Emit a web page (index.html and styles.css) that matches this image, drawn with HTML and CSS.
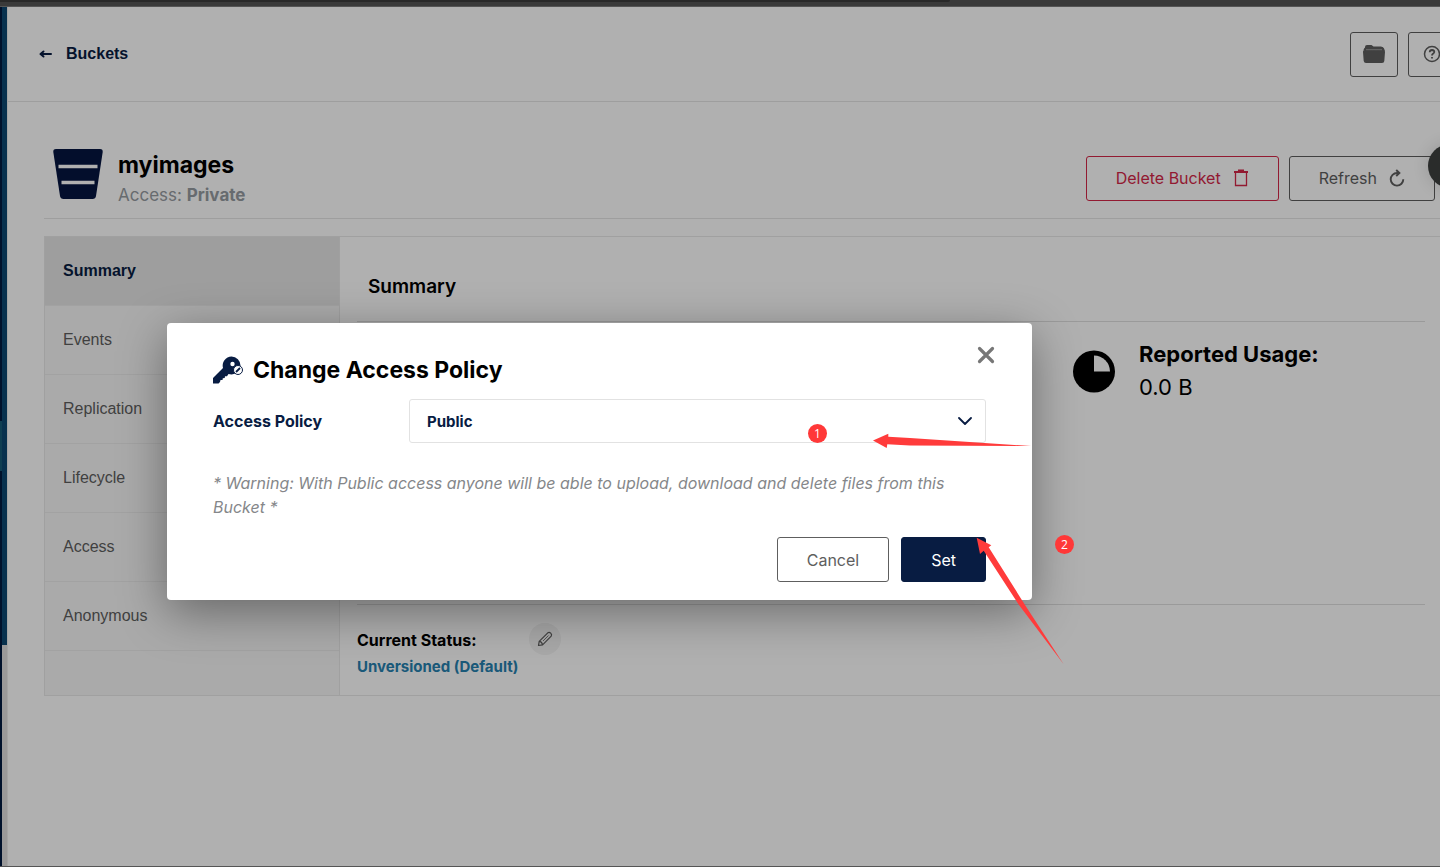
FILE: index.html
```html
<!DOCTYPE html>
<html lang="en">
<head>
    <meta charset="UTF-8">
    <meta name="viewport" content="width=device-width, initial-scale=1.0">
    <title>Buckets - myimages</title>
    <link rel="stylesheet" href="styles.css">
</head>
<body>
    <div class="window-bar"><div class="window-tab"></div></div>

    <div class="app">
        <nav class="sidebar" aria-label="Main menu">
            <div class="sidebar-edge"><div class="sidebar-active"></div></div>
            <div class="sidebar-body"></div>
        </nav>

        <main class="main">
            <header class="page-header">
                <a class="back-link" href="#">
                    <svg width="14" height="12" viewBox="0 0 14 12" fill="none" stroke="currentColor" stroke-width="2" stroke-linecap="round" stroke-linejoin="round">
                        <path d="M12 6H2M4.500 3.500L1.500 6L4.500 8.500"/>
                    </svg>
                    Buckets
                </a>
                <div class="header-actions">
                    <button class="btn icon-btn" aria-label="Object manager">
                        <svg width="24" height="20" viewBox="0 0 24 20" fill="currentColor">
                            <path d="M3 4V3Q3 1 5 1H9.500L11.500 2.500H19Q21.500 2.500 21.800 5L3 5Z"/>
                            <path d="M2.500 6H21.500Q23.200 6 23 8L22.300 17Q22.200 19 20 19H4Q2 19 1.700 17L1 8Q.8 6 2.500 6Z"/>
                            <path d="M1.500 6Q2 3.300 4 3.300H20Q22.300 3.300 22.700 7Z"/>
                            <path d="M4 5.700H20" stroke="#aaa" stroke-width=".8"/>
                        </svg>
                    </button>
                    <button class="btn icon-btn" aria-label="Help">
                        <svg width="18" height="18" viewBox="0 0 18 18" fill="none" stroke="currentColor" stroke-width="1.500">
                            <circle cx="9" cy="9" r="7.500"/>
                            <path d="M6.700 7.200Q6.800 5 9 5Q11.300 5.100 11.300 7Q11.200 8 10 8.700Q9 9.300 9 10.500M9 12V13.600" stroke-width="1.800"/>
                        </svg>
                    </button>
                </div>
            </header>

            <div class="content">
                <section class="bucket-head">
                    <svg class="bucket-icon" width="50" height="50" viewBox="0 0 50 50">
                        <path fill="#051540" d="M3 0H47Q50 0 49.700 3L43 47Q42.500 50 39.500 50H10.500Q7.500 50 7 47L.3 3Q0 0 3 0Z"/>
                        <path stroke="#fff" stroke-width="3.600" d="M5.500 17.500H44.500M8.500 33.500H41.500"/>
                    </svg>
                    <div class="bucket-title">
                        <h1>myimages</h1>
                        <p>Access: <strong>Private</strong></p>
                    </div>
                    <div class="bucket-actions">
                        <button class="btn btn-danger">
                            Delete Bucket
                            <svg width="16" height="18" viewBox="0 0 16 18" fill="none" stroke="currentColor">
                                <path d="M1 3H15M5 1.500H11" stroke-width="2"/>
                                <path d="M2.500 3.500V16.500H13.500V3.500" stroke-width="1.300"/>
                            </svg>
                        </button>
                        <button class="btn">
                            Refresh
                            <svg width="16" height="18" viewBox="0 0 16 18" fill="none" stroke="currentColor" stroke-width="1.900">
                                <path d="M9 4H8A6.300 6.300 0 1 0 14.300 10.300"/>
                                <path d="M7.200 1L10.400 4L7.200 7"/>
                            </svg>
                        </button>
                    </div>
                </section>

                <div class="tabs">
                    <nav class="tab-list">
                        <a class="tab selected" href="#">Summary</a>
                        <a class="tab" href="#">Events</a>
                        <a class="tab" href="#">Replication</a>
                        <a class="tab" href="#">Lifecycle</a>
                        <a class="tab" href="#">Access</a>
                        <a class="tab" href="#">Anonymous</a>
                    </nav>
                    <section class="tab-panel">
                        <h2>Summary</h2>
                        <div class="details">
                            <div class="usage">
                                <svg width="42" height="43" viewBox="0 0 42 43">
                                    <circle cx="21" cy="21.500" r="21"/>
                                    <path fill="#fff" d="M21 5.500A16 16 0 0 1 37 21.500H21Z"/>
                                </svg>
                                <div>
                                    <h3>Reported Usage:</h3>
                                    <p>0.0 B</p>
                                </div>
                            </div>
                        </div>
                        <div class="versioning">
                            <div>
                                <h4>Current Status:</h4>
                                <a href="#">Unversioned (Default)</a>
                            </div>
                            <button class="edit-btn" aria-label="Edit versioning">
                                <svg width="16" height="16" viewBox="0 0 16 16" fill="none" stroke="currentColor" stroke-width="1.200" stroke-linejoin="round">
                                    <path d="M1.500 14.500L2.200 10.400L10.800 1.800Q12.300.8 13.700 2.200Q15.200 3.700 14.200 5.200L5.600 13.800ZM2.200 10.400Q4.800 10.600 5.600 13.800"/>
                                    <path d="M6 10L11.500 4.500" stroke-width=".8"/>
                                </svg>
                            </button>
                        </div>
                    </section>
                </div>
            </div>
        </main>

        <div class="overlay">
            <div class="modal" role="dialog" aria-labelledby="modalTitle">
                <button class="close-button" aria-label="Close modal">
                    <svg width="18" height="18" viewBox="0 0 18 18" fill="none" stroke="currentColor" stroke-width="3.200" stroke-linecap="round">
                        <path d="M2.500 2.500L15.500 15.500M15.500 2.500L2.500 15.500"/>
                    </svg>
                </button>
                <h2 class="modal-title" id="modalTitle">
                    <svg width="30" height="28" viewBox="0 0 30 28">
                        <path fill="#081c42" d="M18.500.5A9 9 0 0 1 27.500 9.500A9 9 0 0 1 18.500 18.500L15.500 18L14 20.300L12 20.200L11.700 22L9.800 22.300L9.500 24L7.500 24L7 26L5.500 27.500H0V22L10 12A9 9 0 0 1 18.500.5Z"/>
                        <circle cx="19.500" cy="8" r="2.200" fill="#fff"/>
                        <circle cx="25" cy="14" r="4.500" fill="#fff" stroke="#081c42"/>
                        <path d="M23 16L27 12" stroke="#081c42" stroke-width="1.800"/>
                    </svg>
                    Change Access Policy
                </h2>
                <div class="field">
                    <label for="policy">Access Policy</label>
                    <div class="select-wrap">
                        <select id="policy">
                            <option>Public</option>
                            <option>Private</option>
                            <option>Custom</option>
                        </select>
                        <svg width="14" height="8" viewBox="0 0 14 8" fill="none" stroke="#081c42" stroke-width="1.800" stroke-linecap="round" stroke-linejoin="round">
                            <path d="M1 1L7 7L13 1"/>
                        </svg>
                    </div>
                </div>
                <p class="warning">* Warning: With Public access anyone will be able to upload, download and delete files from this Bucket *</p>
                <div class="modal-actions">
                    <button class="btn">Cancel</button>
                    <button class="btn btn-primary">Set</button>
                </div>

                <!-- step markers -->
                <svg class="arrows" width="900" height="350" viewBox="0 0 900 350" fill="#ff3b3b">
                    <path d="M706 117.500L721.300 110.700V113.700L743 115L864 123L743 122.500L720.300 121.300L719.700 125Z"/>
                    <path d="M809.700 214.700L824.300 222.300L821.700 224.300L858 282L896.500 341L852 282L816.700 227.700L813 231Z"/>
                </svg>
                <span class="step step-1">1</span>
                <span class="step step-2">2</span>
            </div>
        </div>
        <div class="float-button"></div>
    </div>
</body>
</html>
```
FILE: styles.css
```css
* {
    box-sizing: border-box;
}

body {
    margin: 0;
    min-height: 100vh;
    display: flex;
    flex-direction: column;
    font-family: Inter, "Liberation Sans", sans-serif;
    color: #000;
    background: #fff;
}

h1, h2, h3, h4, p {
    margin: 0;
}

a {
    text-decoration: none;
}

svg {
    flex-shrink: 0;
}

.window-bar {
    height: 7px;
    background: #3a3a3a;
    border-bottom: 1px solid #555;
}

.window-tab {
    width: 66%;
    height: 2px;
    background: #292929;
    border-bottom-right-radius: 4px;
}

.app {
    position: relative;
    flex: 1;
    display: flex;
    overflow: hidden;
    border-bottom: 1px solid #555;
}

/* sidebar, scrolled almost out of view */
.sidebar {
    display: flex;
    width: 8px;
    background: #e0dede;
    border-right: 1px solid #eee;
}

.sidebar-edge {
    width: 2px;
    background: #001a3f;
    padding-top: 414px;
}

.sidebar-active {
    height: 50px;
    background: #175a77;
}

.sidebar-body {
    flex: 1;
    height: 638px;
    background: #0d4872;
}

/* main is a little wider than the window */
.main {
    flex: 1;
    margin-right: -16px;
}

.page-header {
    display: flex;
    align-items: center;
    justify-content: space-between;
    height: 95px;
    padding-left: 31px;
    border-bottom: 1px solid #e5e5e5;
}

.back-link {
    display: flex;
    align-items: center;
    gap: 13px;
    color: #081c42;
    font: bold 16px "Liberation Sans", sans-serif;
}

.header-actions,
.bucket-actions {
    display: flex;
    gap: 10px;
}

.bucket-actions {
    padding-top: 8px;
}

.btn {
    display: flex;
    align-items: center;
    justify-content: center;
    gap: 12px;
    height: 45px;
    padding: 0 29px;
    border: 1px solid #5e5e5e;
    border-radius: 3px;
    background: transparent;
    color: #5e5e5e;
    font: 16px Inter, sans-serif;
}

.icon-btn {
    width: 48px;
    padding: 0;
}

.btn-danger {
    border-color: #d42748;
    color: #d42748;
}

.btn-primary {
    border-color: #081c42;
    background: #081c42;
    color: #fff;
}

.content {
    padding: 28px 13px 0 36px;
}

.bucket-head {
    display: flex;
    align-items: center;
    height: 89px;
    padding: 0 8px 0 9px;
    border-bottom: 1px solid #e5e5e5;
}

.bucket-title {
    flex: 1;
    margin-left: 15px;
    padding-top: 10px;
}

.bucket-title h1 {
    font-size: 23px;
    line-height: 32px;
}

.bucket-title p {
    font-size: 17px;
    line-height: 28px;
    color: #969ba1;
}

.tabs {
    display: flex;
    margin-top: 17px;
    border: 1px solid #e8e8e8;
}

.tab-list {
    width: 295px;
    padding-bottom: 44px;
    background: #f7f7f7;
    border-right: 1px solid #e8e8e8;
}

.tab {
    display: flex;
    align-items: center;
    height: 69px;
    padding-left: 18px;
    border-bottom: 1px solid #ebebeb;
    color: #5e5e5e;
    font: 16px "Liberation Sans", sans-serif;
}

.tab.selected {
    background: #e5e5e5;
    color: #081c42;
    font-weight: bold;
}

.tab-panel {
    flex: 1;
    padding: 0 17px;
}

.tab-panel h2 {
    padding: 36px 11px 20px;
    font-size: 19px;
    font-weight: 600;
    line-height: 28px;
    border-bottom: 1px solid #e0e0e0;
}

.details {
    display: grid;
    grid-template-columns: 2fr 1fr;
    height: 283px;
    border-bottom: 1px solid #e0e0e0;
}

.usage {
    grid-column: 2;
    display: flex;
    gap: 24px;
    padding: 16px 4px;
}

.usage svg {
    margin-top: 12px;
}

.usage h3,
.usage p {
    font-size: 22px;
    line-height: 33px;
}

.versioning {
    display: flex;
    gap: 11px;
    padding-top: 18px;
    font-weight: bold;
}

.versioning h4 {
    font-size: 16px;
    line-height: 34px;
}

.versioning a {
    display: block;
    color: #2781b0;
    font-size: 15px;
    line-height: 20px;
}

.edit-btn {
    display: grid;
    place-items: center;
    width: 32px;
    height: 32px;
    padding: 0;
    border: none;
    border-radius: 50%;
    background: #f3f3f3;
    color: #5e5e5e;
}

.overlay {
    position: absolute;
    inset: 0;
    padding: 316px 0 0 167px;
    background: rgba(0, 0, 0, 0.31);
}

.modal {
    position: relative;
    width: 865px;
    max-width: 100%;
    padding: 30px 46px 18px;
    border-radius: 4px;
    background: #fff;
    box-shadow: 0 12px 48px rgba(0, 0, 0, 0.4);
}

.close-button {
    position: absolute;
    top: 23px;
    right: 37px;
    display: flex;
    padding: 0;
    border: none;
    background: none;
    color: #777;
}

.modal-title {
    display: flex;
    align-items: center;
    gap: 10px;
    font-size: 23px;
    line-height: 34px;
}

.field {
    display: grid;
    grid-template-columns: 196px 1fr;
    align-items: center;
    margin-top: 12px;
    color: #081c42;
}

.field label {
    font-size: 16px;
    font-weight: bold;
}

.select-wrap {
    position: relative;
}

.select-wrap select {
    appearance: none;
    width: 100%;
    height: 44px;
    padding: 0 17px;
    border: 1px solid #e2e2e2;
    border-radius: 3px;
    background: #fff;
    color: #081c42;
    font: bold 15px Inter, sans-serif;
}

.select-wrap svg {
    position: absolute;
    right: 14px;
    top: 18px;
    pointer-events: none;
}

.warning {
    margin-top: 28px;
    color: #85878a;
    font-size: 16px;
    font-style: italic;
    line-height: 24px;
}

.modal-actions {
    display: flex;
    justify-content: flex-end;
    gap: 12px;
    margin-top: 18px;
}

.arrows {
    position: absolute;
    top: 0;
    left: 0;
    pointer-events: none;
}

.step {
    position: absolute;
    width: 19px;
    height: 19px;
    border-radius: 50%;
    background: #ff3838;
    color: #fff;
    font: 12px/19px "Open Sans", sans-serif;
    text-align: center;
}

.step-1 {
    top: 101px;
    left: 641px;
}

.step-2 {
    top: 212px;
    left: 888px;
}

.float-button {
    position: absolute;
    top: 137px;
    right: -32px;
    width: 44px;
    height: 44px;
    border-radius: 50%;
    background: #2a2c2b;
    box-shadow: 0 0 16px rgba(0, 0, 0, 0.15);
}
```
